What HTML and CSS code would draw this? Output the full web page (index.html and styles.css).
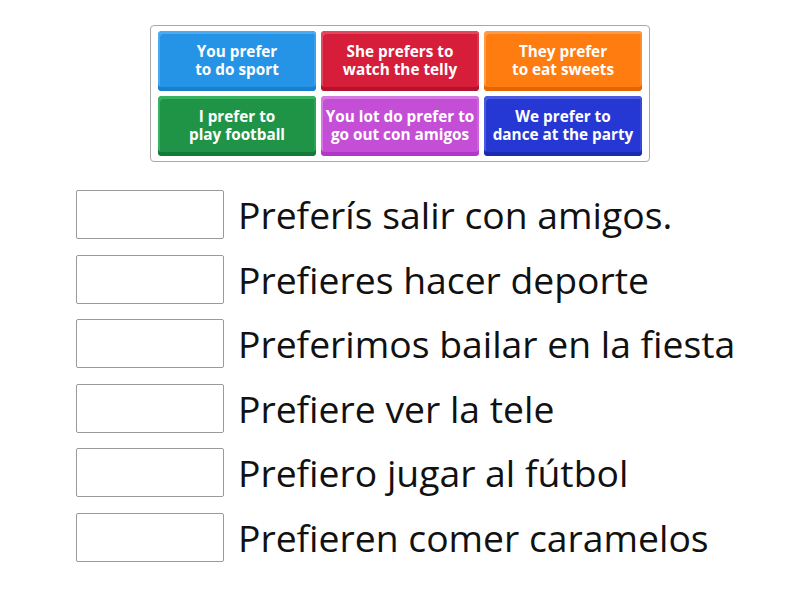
FILE: index.html
```html
<!DOCTYPE html>
<html lang="en">
<head>
<meta charset="utf-8">
<title>Match up</title>
<link rel="stylesheet" href="styles.css">
</head>
<body>
<div class="page">
  <div class="bank">
    <div class="tile blue">You prefer<br>to do sport</div>
    <div class="tile red">She prefers to<br>watch the telly</div>
    <div class="tile orange">They prefer<br>to eat sweets</div>
    <div class="tile green">I prefer to<br>play football</div>
    <div class="tile purple">You lot do prefer to<br>go out con amigos</div>
    <div class="tile navy">We prefer to<br>dance at the party</div>
  </div>
  <div class="rows">
    <div class="row"><div class="slot"></div><div class="label">Preferís salir con amigos.</div></div>
    <div class="row"><div class="slot"></div><div class="label">Prefieres hacer deporte</div></div>
    <div class="row"><div class="slot"></div><div class="label">Preferimos bailar en la fiesta</div></div>
    <div class="row"><div class="slot"></div><div class="label">Prefiere ver la tele</div></div>
    <div class="row"><div class="slot"></div><div class="label">Prefiero jugar al fútbol</div></div>
    <div class="row"><div class="slot"></div><div class="label">Prefieren comer caramelos</div></div>
  </div>
</div>
</body>
</html>
```
FILE: styles.css
```css
html, body {
  margin: 0;
  padding: 0;
  background: #ffffff;
}
body {
  font-family: "Open Sans", "DejaVu Sans", sans-serif;
  width: 800px;
  height: 600px;
  overflow: hidden;
}
.page {
  padding-top: 25px;
}
.bank {
  width: 484px;
  margin-left: 150px;
  padding: 5px 7px;
  border: 1px solid #a8a8a8;
  border-radius: 4px;
  display: grid;
  grid-template-columns: repeat(3, 158px);
  grid-auto-rows: 60px;
  column-gap: 5px;
  row-gap: 5px;
}
.tile {
  border-radius: 4px;
  color: #ffffff;
  font-weight: 700;
  font-size: 15.3px;
  line-height: 18px;
  text-align: center;
  display: flex;
  align-items: center;
  justify-content: center;
  padding-bottom: 3px;
  box-sizing: border-box;
  white-space: nowrap;
}
.blue {
  background: #2694e6;
  box-shadow: inset 0 -4px 0 #1a7fcc, inset 2px 3px 0 #4cabf0, inset -2px 0 0 #3aa0ec;
}
.red {
  background: #d61d3a;
  box-shadow: inset 0 -4px 0 #b5132d, inset 2px 3px 0 #e2475e, inset -2px 0 0 #dc3550;
}
.orange {
  background: #ff7c10;
  box-shadow: inset 0 -4px 0 #e46600, inset 2px 3px 0 #ff9a45, inset -2px 0 0 #ff8c2c;
}
.green {
  background: #1f9447;
  box-shadow: inset 0 -4px 0 #137a37, inset 2px 3px 0 #36b360, inset -2px 0 0 #2aa454;
}
.purple {
  background: #c44fd6;
  box-shadow: inset 0 -4px 0 #b236c7, inset 2px 3px 0 #d578e3, inset -2px 0 0 #cc64dc;
}
.navy {
  background: #2538d4;
  box-shadow: inset 0 -4px 0 #1a2bb0, inset 2px 3px 0 #4a5be2, inset -2px 0 0 #3649da;
}
.rows {
  margin-top: 28px;
  margin-left: 76px;
  display: flex;
  flex-direction: column;
  gap: 15.5px;
}
.row {
  display: flex;
  align-items: center;
  gap: 14px;
  height: 49px;
}
.slot {
  width: 146px;
  height: 47px;
  border: 1px solid #9a9a9a;
  border-radius: 2px;
  background: #ffffff;
  flex: none;
}
.label {
  font-size: 37.3px;
  line-height: 49px;
  color: #111111;
  white-space: nowrap;
}
```
